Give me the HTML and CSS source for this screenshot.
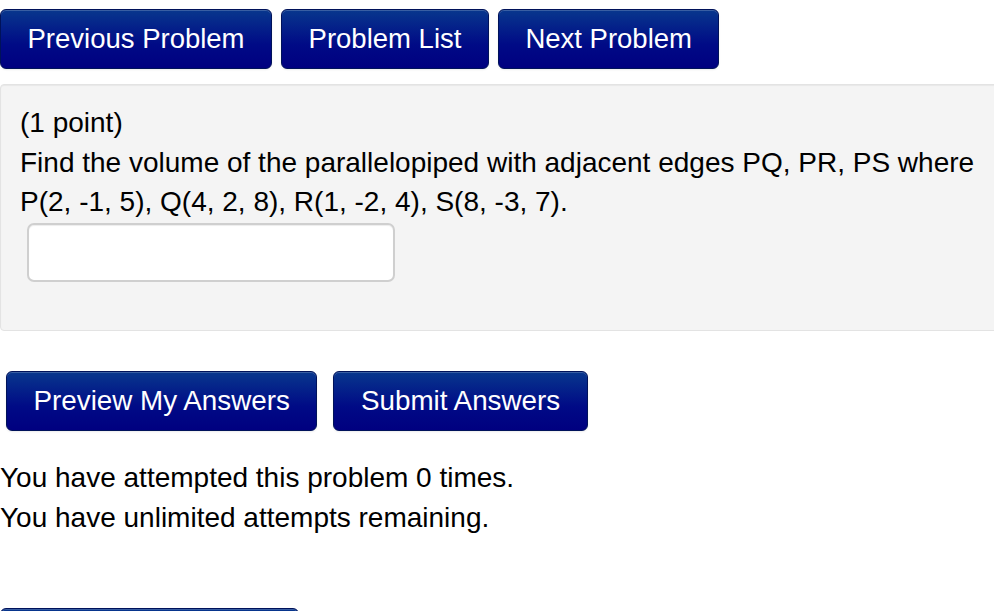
FILE: index.html
```html
<!DOCTYPE html>
<html>
<head>
<meta charset="utf-8">
<link rel="stylesheet" href="styles.css">
</head>
<body>
<div class="page">
  <div class="nav-row">
    <a class="btn">Previous Problem</a>
    <a class="btn">Problem List</a>
    <a class="btn">Next Problem</a>
  </div>
  <div class="well">
    <div class="problem-text">
      (1 point)<br>
      Find the volume of the parallelopiped with adjacent edges PQ, PR, PS where P(2, -1, 5), Q(4, 2, 8), R(1, -2, 4), S(8, -3, 7).<br>
      <input class="answer" type="text">
    </div>
  </div>
  <div class="submit-row">
    <a class="btn btn-lg">Preview My Answers</a>
    <a class="btn btn-lg">Submit Answers</a>
  </div>
  <div class="attempts">
    You have attempted this problem 0 times.<br>
    You have unlimited attempts remaining.
  </div>
  <div class="bottom-row">
    <a class="btn btn-wide" aria-label="Email Instructor"></a>
  </div>
</div>
</body>
</html>
```
FILE: styles.css
```css
html, body {
  margin: 0;
  padding: 0;
  background: #fff;
}
body {
  font-family: "Liberation Sans", Arial, sans-serif;
  font-size: 28px;
  color: #000;
  overflow: hidden;
}
.page {
  width: 1010px;
}
.nav-row {
  display: flex;
  gap: 9px;
  padding-top: 9px;
}
.btn {
  display: inline-block;
  box-sizing: border-box;
  height: 60px;
  line-height: 58px;
  padding: 0 26.5px;
  color: #fff;
  font-size: 27.5px;
  text-decoration: none;
  border: 1px solid #00125a;
  border-radius: 6px;
  background: linear-gradient(to bottom, #08378d 0%, #000a86 60%, #000080 100%);
  box-shadow: inset 0 1px 0 rgba(255,255,255,0.2), 0 1px 2px rgba(0,0,0,0.08);
  white-space: nowrap;
}
.btn-lg {
  font-size: 27.8px;
}
.well {
  margin-top: 15px;
  background: #f4f4f4;
  border: 1px solid #e3e3e3;
  border-radius: 4px;
  box-shadow: inset 0 1px 1px rgba(0,0,0,0.05);
  padding: 18px 30px 19px 19px;
  height: 208px;
  box-sizing: content-box;
}
.problem-text {
  line-height: 39.5px;
  width: 970px;
}
.answer {
  display: block;
  box-sizing: border-box;
  margin: 1px 0 0 7px;
  width: 368px;
  height: 59px;
  background: #fff;
  border: 2px solid #cfcfcf;
  border-radius: 7px;
  box-shadow: inset 0 1px 1px rgba(0,0,0,0.075);
  font-size: 28px;
}
.submit-row {
  display: flex;
  gap: 16px;
  margin-top: 40px;
  padding-left: 6px;
}
.attempts {
  margin-top: 27px;
  line-height: 40px;
}
.bottom-row {
  margin-top: 70px;
}
.btn-wide {
  width: 299px;
}
```
